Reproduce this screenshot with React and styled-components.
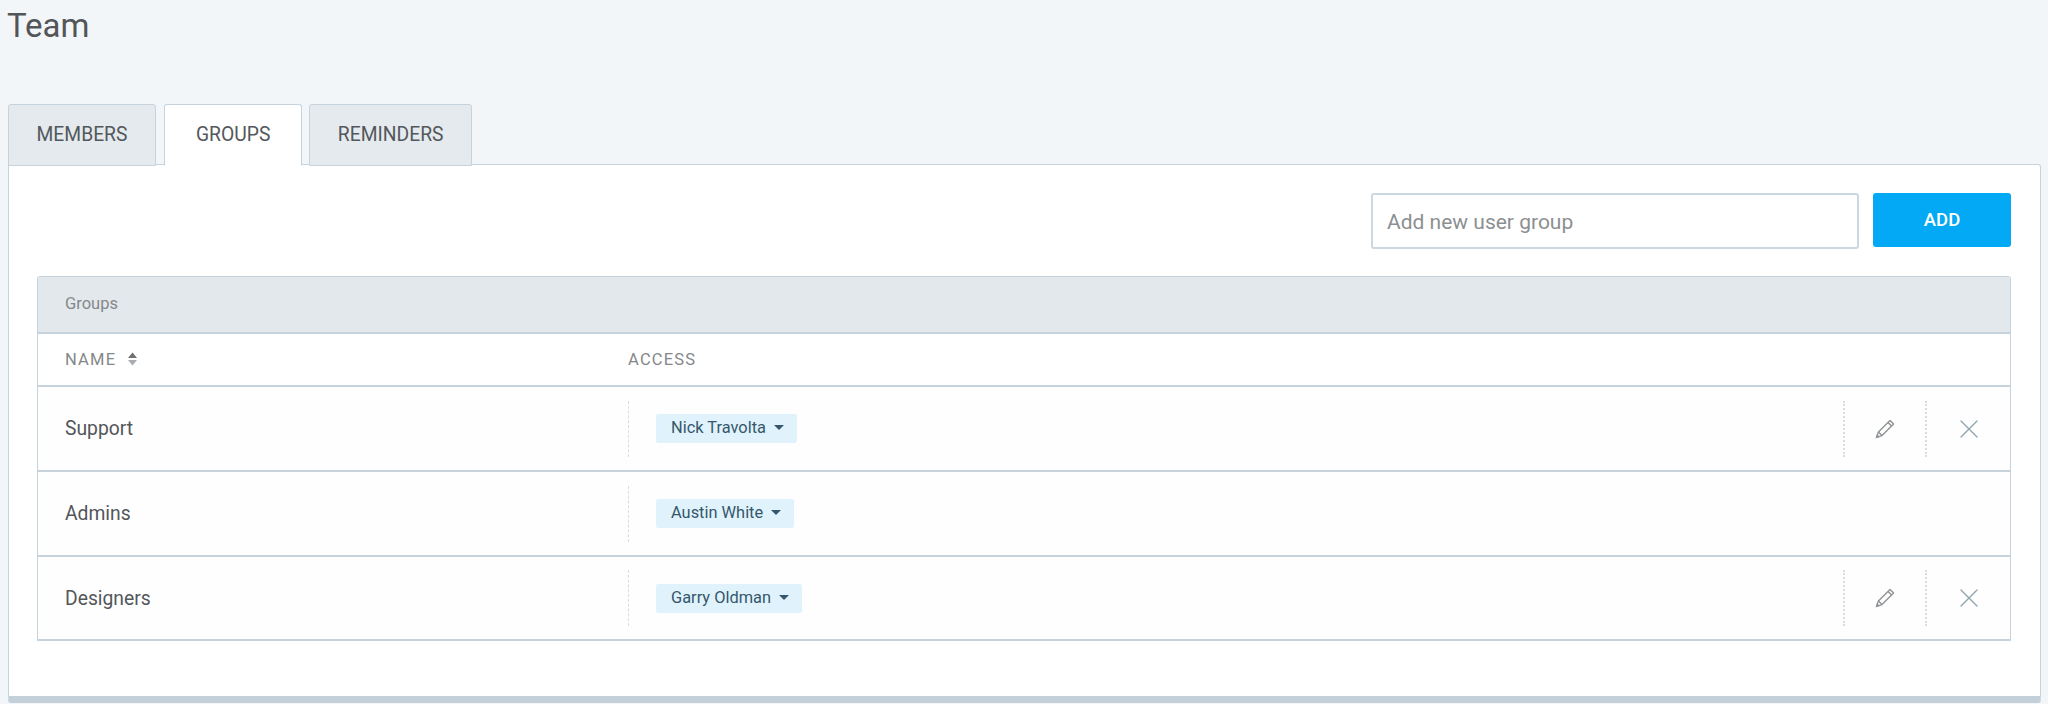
import React from "react";
import styled, { createGlobalStyle } from "styled-components";

const GROUPS = [
  { name: "Support", user: "Nick Travolta", editable: true },
  { name: "Admins", user: "Austin White", editable: false },
  { name: "Designers", user: "Garry Oldman", editable: true },
];

const TABS = ["MEMBERS", "GROUPS", "REMINDERS"];

export default function App() {
  return (
    <Page>
      <GlobalStyle />
      <Title>Team</Title>
      <TabBar>
        {TABS.map((tab) => (
          <Tab key={tab} $active={tab === "GROUPS"}>{tab}</Tab>
        ))}
      </TabBar>
      <Panel>
        <AddForm>
          <AddInput placeholder="Add new user group" />
          <AddButton>ADD</AddButton>
        </AddForm>
        <GroupsCard>
          <CardTitle>Groups</CardTitle>
          <HeadRow>
            <HeadCell>
              NAME
              <svg width="11" height="16" viewBox="0 0 11 16">
                <path d="M5.5 1.5 10 7H1z" fill="#6d6f72" />
                <path d="M5.5 14.5 10 9H1z" fill="#a9adb1" />
              </svg>
            </HeadCell>
            <HeadCell>ACCESS</HeadCell>
          </HeadRow>
          {GROUPS.map((group) => (
            <Row key={group.name}>
              <NameCell>{group.name}</NameCell>
              <AccessCell>
                <UserTag>
                  {group.user}
                  <Caret />
                </UserTag>
              </AccessCell>
              {group.editable && (
                <>
                  <ActionCell>
                    <svg width="20" height="20" viewBox="0 0 20 20" fill="none" stroke="#8f9497" strokeWidth="1.4">
                      <path d="M15 1.4 18.6 5 7 16.6 1.6 18.4l1.8-5.4z" strokeLinejoin="round" />
                      <path d="M3.4 13l3.6 3.6M13 3.4 16.6 7" />
                      <path d="M1.6 18.4l2-.7-1.3-1.3z" fill="#8f9497" />
                    </svg>
                  </ActionCell>
                  <ActionCell>
                    <svg width="18" height="18" viewBox="0 0 18 18" stroke="#8ea3ae" strokeWidth="1.3" strokeLinecap="round">
                      <path d="M1 1l16 16M17 1 1 17" />
                    </svg>
                  </ActionCell>
                </>
              )}
            </Row>
          ))}
        </GroupsCard>
      </Panel>
    </Page>
  );
}

const GlobalStyle = createGlobalStyle`
  html, body {
    margin: 0;
    padding: 0;
    background: #f2f6f9;
  }
  * {
    box-sizing: border-box;
  }
`;

const Page = styled.div`
  width: 2048px;
  height: 704px;
  padding: 0 7px 0 8px;
  overflow: hidden;
  font-family: Roboto, "Liberation Sans", sans-serif;
  color: #4f5254;
`;

const Title = styled.h1`
  margin: 0 0 0 -1px;
  height: 104px;
  padding-top: 6px;
  font-size: 33px;
  line-height: 40px;
  font-weight: 400;
  color: #545557;
`;

const TabBar = styled.div`
  display: flex;
  gap: 7px;
  height: 61px;
  margin-bottom: -1px;
  position: relative;
  z-index: 1;
`;

const Tab = styled.div`
  display: flex;
  align-items: center;
  justify-content: center;
  height: 62px;
  padding: 0 ${(p) => (p.$active ? "31px" : "27.5px")} 1px;
  margin: ${(p) => (p.$active ? "0 0 0 1px" : "0")};
  font-size: 19.3px;
  font-weight: 400;
  color: #53585c;
  background: ${(p) => (p.$active ? "#fff" : "#e5eaee")};
  border: 1px solid #c6d3dd;
  border-bottom-color: ${(p) => (p.$active ? "#fff" : "#c6d3dd")};
  border-radius: 3px 3px 0 0;
`;

const Panel = styled.div`
  width: 2033px;
  height: 539px;
  padding: 28px 29px 0 28px;
  background: #fff;
  border: 1px solid #c6d3dd;
  border-bottom: 7px solid #c3d0da;
  border-radius: 0 3px 3px 3px;
`;

const AddForm = styled.div`
  display: flex;
  justify-content: flex-end;
  gap: 14px;
`;

const AddInput = styled.input`
  width: 488px;
  height: 56px;
  padding: 2px 14px 0;
  font-family: inherit;
  font-size: 21px;
  color: #4f5254;
  background: #fff;
  border: 2px solid #ccd8e0;
  border-radius: 3px;
  outline: none;

  &::placeholder {
    color: #8c8f91;
    opacity: 1;
  }
`;

const AddButton = styled.button`
  width: 138px;
  height: 54px;
  padding: 0;
  font-family: inherit;
  font-size: 18.5px;
  font-weight: 500;
  color: #fff;
  background: #03a9f4;
  border: none;
  border-radius: 3px;
`;

const GroupsCard = styled.div`
  margin-top: 27px;
  border: 1px solid #c6d3dd;
  border-radius: 3px 3px 0 0;
  border-bottom-width: 2px;
`;

const CardTitle = styled.div`
  display: flex;
  align-items: center;
  height: 57px;
  padding: 0 27px 2px;
  font-size: 16.5px;
  color: #85888a;
  background: #e3e8ec;
  border-bottom: 2px solid #c6d3dd;
`;

const HeadRow = styled.div`
  display: grid;
  grid-template-columns: 563px 1fr;
  align-items: center;
  height: 54px;
  padding-left: 27px;
  margin-top: -1px;
  border-bottom: 2px solid #c6d3dd;
`;

const HeadCell = styled.div`
  display: flex;
  align-items: center;
  gap: 11px;
  font-size: 16.5px;
  letter-spacing: 1.2px;
  color: #85888a;
`;

const Row = styled.div`
  display: grid;
  grid-template-columns: 563px 1fr 82px 85px;
  align-items: center;
  height: 85px;
  padding-left: 27px;
  background: #fefefe;
  border-bottom: 2px solid #c6d3dd;

  &:last-child {
    border-bottom: none;
    height: 82px;
  }
`;

const NameCell = styled.div`
  font-size: 19.3px;
  color: #53565a;
`;

const AccessCell = styled.div`
  display: flex;
  align-items: center;
  height: 56px;
  padding-left: 27px;
  border-left: 1px dashed #d3dde3;
`;

const UserTag = styled.div`
  display: inline-flex;
  align-items: center;
  gap: 8px;
  height: 29px;
  padding: 0 13px 2px 15px;
  font-size: 16.4px;
  color: #36576b;
  background: #e0f3fd;
  border-radius: 2px;
`;

const Caret = styled.span`
  width: 0;
  height: 0;
  border-left: 5px solid transparent;
  border-right: 5px solid transparent;
  border-top: 5px solid #36576b;
`;

const ActionCell = styled.div`
  display: flex;
  align-items: center;
  justify-content: center;
  height: 56px;
  border-left: 2px dotted #d3dde3;
`;
